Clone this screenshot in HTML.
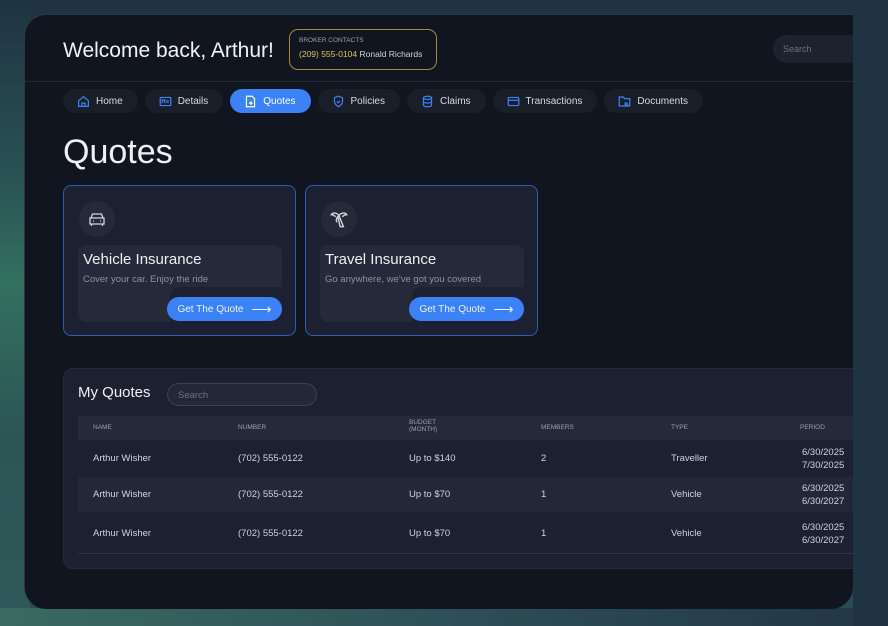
<!DOCTYPE html>
<html><head><style>
*{box-sizing:border-box;margin:0;padding:0}
body{width:888px;height:626px;overflow:hidden;font-family:"Liberation Sans",sans-serif;background:linear-gradient(180deg,#1f3341 0%,#223846 60%,#2b4d55 100%);position:relative}
.glow{position:absolute;left:0;top:0;width:30px;height:626px;background:linear-gradient(180deg,#1f3341 0%,#2a5556 30%,#33705f 45%,#2c5556 70%,#30595a 100%)}
.bot{position:absolute;left:0;top:608px;width:888px;height:18px;background:linear-gradient(90deg,#3a6a62,#2e5058 50%,#223543)}
.frame{position:absolute;left:24px;top:14px;width:829px;height:595px;background:#11151f;border-radius:22px 0 22px 22px;overflow:hidden;border-left:1px solid #2a3a45;border-top:1px solid #2a3a45}
.right{position:absolute;left:853px;top:0;width:35px;height:626px;background:#1f3342}
.h1{position:absolute;left:38px;top:24px;color:#f0f2f5;font-size:21px}
.broker{position:absolute;left:264px;top:14px;width:148px;height:41px;border:1px solid #a88a3e;border-radius:9px;padding:7px 9px}
.broker .a{font-size:6.5px;color:#9aa0ab}
.broker .b{font-size:8.5px;color:#e0c060;margin-top:5px}
.broker .b span{color:#d0d4da}
.search{position:absolute;left:748px;top:20px;width:90px;height:28px;background:#1d2230;border-radius:14px;color:#6b7180;font-size:9px;padding:9px 10px}
.sep{position:absolute;left:0;top:66px;width:829px;height:1px;background:#212836}
.nav{position:absolute;left:38px;top:74px;display:flex;gap:7px}
.nav div{height:24px;border-radius:12px;background:#1a1e29;color:#d6dae2;font-size:10px;display:flex;align-items:center;padding:0 15px 0 14px;gap:6px}
.nav div.on{background:#3b82f6;color:#fff}
.nav svg{width:13px;height:13px;stroke:#3b82f6;fill:none;stroke-width:1.5}
.nav .on svg{stroke:#fff}
.title{position:absolute;left:38px;top:118px;color:#eef0f3;font-size:34px}
.card{position:absolute;top:170px;width:233px;height:151px;border:1px solid #2f5cb0;border-radius:8px;background:#1c2030}
.ic{position:absolute;left:15px;top:15px;width:36px;height:36px;border-radius:50%;background:#252a3a;display:flex;align-items:center;justify-content:center}
.inner{position:absolute;left:14px;top:59px;width:204px;height:77px;background:#252a3a;border-radius:8px}
.inner h3{font-weight:normal;color:#eef0f3;font-size:15px;position:absolute;left:5px;top:6px}
.inner p{color:#8c929f;font-size:9.5px;position:absolute;left:5px;top:29px}
.notch{position:absolute;left:92px;top:42px;width:112px;height:35px;background:#1c2030;border-radius:10px 0 0 0}
.btn{position:absolute;right:0;top:52px;width:115px;height:24px;border-radius:12px;background:#3b82f6;color:#eaf1ff;font-size:10px;display:flex;align-items:center;justify-content:center;gap:8px}
.tbl{position:absolute;left:38px;top:353px;width:800px;height:201px;background:#1c2030;border-radius:10px;border:1px solid #252b3a}
.tbl h2{position:absolute;left:14px;top:15px;font-weight:normal;color:#eef0f3;font-size:15px}
.ts{position:absolute;left:103px;top:14px;width:150px;height:23px;border:1px solid #3a4150;border-radius:12px;background:#232838;color:#6b7180;font-size:9.5px;padding:6px 10px}
.row{position:absolute;left:14px;width:790px;font-size:9.5px;color:#d0d4da}
.row span{position:absolute}
.hd{top:47px;height:24px;background:#252a3a;font-size:6.5px;color:#9aa0ab}
.c1{left:15px}.c2{left:160px}.c3{left:331px}.c4{left:463px}.c5{left:593px}.c6{left:722px}
</style></head><body>
<div class="glow"></div><div class="bot"></div><div class="right"></div>
<div class="frame">
<div class="h1">Welcome back, Arthur!</div>
<div class="broker"><div class="a">BROKER CONTACTS</div><div class="b">(209) 555-0104 <span>Ronald Richards</span></div></div>
<div class="search">Search</div>
<div class="sep"></div>
<div class="nav">
<div><svg viewBox="0 0 16 16"><path d="M2 7l6-5 6 5v7H2zM6 14v-4h4v4"/></svg>Home</div>
<div><svg viewBox="0 0 16 16"><rect x="1.5" y="3" width="13" height="10" rx="1"/><path d="M4 10V6h3v4M9 7h3M9 9h3"/></svg>Details</div>
<div class="on"><svg viewBox="0 0 16 16"><path d="M3 1.5h7l3 3v10H3zM6 10h4M8 8l2 2-2 2"/></svg>Quotes</div>
<div><svg viewBox="0 0 16 16"><path d="M8 1.5l5 2v4c0 3.5-2.5 5.5-5 7-2.5-1.5-5-3.5-5-7v-4zM6 8l1.5 1.5L10 7"/></svg>Policies</div>
<div><svg viewBox="0 0 16 16"><ellipse cx="8" cy="3.5" rx="5" ry="2"/><path d="M3 3.5v9c0 1 2 2 5 2s5-1 5-2v-9M3 8c0 1 2 2 5 2s5-1 5-2"/></svg>Claims</div>
<div><svg viewBox="0 0 16 16"><rect x="1.5" y="3" width="13" height="10" rx="1.5"/><path d="M1.5 6.5h13"/></svg>Transactions</div>
<div><svg viewBox="0 0 16 16"><path d="M1.5 2.5h5l1.5 2h6.5v9H1.5zM10 9.5a1.5 1.5 0 1 0 .1 0M11.5 12l1.5 1.5"/></svg>Documents</div>
</div>
<div class="title">Quotes</div>
<div class="card" style="left:38px">
<div class="ic"><svg width="20" height="20" viewBox="0 0 20 20" fill="none" stroke="#d0d4da" stroke-width="1.3"><path d="M4 9l1.5-4h9L16 9M3 9h14v6H3zM4.5 15v2M15.5 15v2M6 12h1M13 12h1"/></svg></div>
<div class="inner"><h3>Vehicle Insurance</h3><p>Cover your car. Enjoy the ride</p><div class="notch"></div><div class="btn">Get The Quote <span style="font-size:14px">⟶</span></div></div>
</div>
<div class="card" style="left:280px">
<div class="ic"><svg width="22" height="22" viewBox="0 0 20 20" fill="none" stroke="#d0d4da" stroke-width="1.3"><path d="M10 7c-2-3-6-3-7-1 2 0 3 1 4 2M10 7c2-3 6-3 7-1-2 0-3 1-4 2M10 7c-2 1-3 4-2 6M10 7l4 10h-3l-2-9"/></svg></div>
<div class="inner"><h3>Travel Insurance</h3><p>Go anywhere, we've got you covered</p><div class="notch"></div><div class="btn">Get The Quote <span style="font-size:14px">⟶</span></div></div>
</div>
<div class="tbl">
<h2>My Quotes</h2><div class="ts">Search</div>
<div class="row hd"><span class="c1" style="top:8px">NAME</span><span class="c2" style="top:8px">NUMBER</span><span class="c3" style="top:3px">BUDGET<br>(MONTH)</span><span class="c4" style="top:8px">MEMBERS</span><span class="c5" style="top:8px">TYPE</span><span class="c6" style="top:8px">PERIOD</span></div>
<div class="row" style="top:71px;height:37px"><span class="c1" style="top:13px">Arthur Wisher</span><span class="c2" style="top:13px">(702) 555-0122</span><span class="c3" style="top:13px">Up to $140</span><span class="c4" style="top:13px">2</span><span class="c5" style="top:13px">Traveller</span><span class="c6" style="top:6px;line-height:13px;left:724px">6/30/2025<br>7/30/2025</span></div>
<div class="row" style="top:108px;height:35px;background:#232838"><span class="c1" style="top:12px">Arthur Wisher</span><span class="c2" style="top:12px">(702) 555-0122</span><span class="c3" style="top:12px">Up to $70</span><span class="c4" style="top:12px">1</span><span class="c5" style="top:12px">Vehicle</span><span class="c6" style="top:5px;line-height:13px;left:724px">6/30/2025<br>6/30/2027</span></div>
<div class="row" style="top:143px;height:42px;border-bottom:1px solid #2e3445"><span class="c1" style="top:16px">Arthur Wisher</span><span class="c2" style="top:16px">(702) 555-0122</span><span class="c3" style="top:16px">Up to $70</span><span class="c4" style="top:16px">1</span><span class="c5" style="top:16px">Vehicle</span><span class="c6" style="top:9px;line-height:13px;left:724px">6/30/2025<br>6/30/2027</span></div>
</div>
</div>
</body></html>
